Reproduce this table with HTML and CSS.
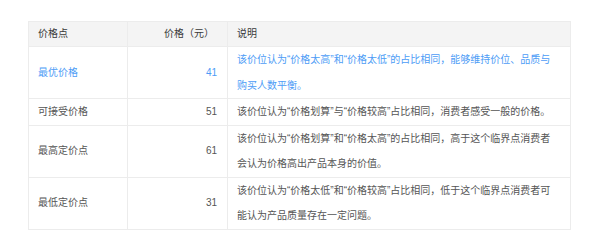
FILE: index.html
```html
<!DOCTYPE html>
<html lang="zh">
<head>
<meta charset="utf-8">
<link rel="stylesheet" href="styles.css">
</head>
<body>
<div class="wrap">
<table class="price-table">
  <thead>
    <tr><th class="c1">价格点</th><th class="c2 num">价格（元）</th><th class="c3">说明</th></tr>
  </thead>
  <tbody>
    <tr class="hl"><td>最优价格</td><td class="num">41</td><td>该价位认为“价格太高”和“价格太低”的占比相同，能够维持价位、品质与购买人数平衡。</td></tr>
    <tr><td>可接受价格</td><td class="num">51</td><td>该价位认为“价格划算”与“价格较高”占比相同，消费者感受一般的价格。</td></tr>
    <tr><td>最高定价点</td><td class="num">61</td><td>该价位认为“价格划算”和“价格太高”的占比相同，高于这个临界点消费者会认为价格高出产品本身的价值。</td></tr>
    <tr><td>最低定价点</td><td class="num">31</td><td>该价位认为“价格太低”和“价格较高”占比相同，低于这个临界点消费者可能认为产品质量存在一定问题。</td></tr>
  </tbody>
</table>
</div>
</body>
</html>
```
FILE: styles.css
```css
html, body { margin: 0; padding: 0; background: #fff; }
.wrap { padding: 21px 0 0 28px; }
.price-table {
  border-collapse: collapse;
  table-layout: fixed;
  width: 542px;
  font-family: "Liberation Sans", "Noto Sans CJK SC", sans-serif;
  font-size: 10px;
  color: #555;
}
.price-table th, .price-table td {
  box-sizing: border-box;
  border: 1px solid #ececec;
  padding: 0 12px 0 9px;
  text-align: left;
  vertical-align: middle;
  line-height: 25.5px;
  font-weight: normal;
}
.price-table .c1 { width: 99px; }
.price-table .c2 { width: 100px; }
.price-table .c3 { width: 343px; }
.price-table th {
  background: #f4f4f4;
  color: #3a3a3a;
  line-height: 24px;
}
.price-table .num { text-align: right; padding-right: 10px; }
.price-table th.num { padding-right: 13px; }
.hl td { color: #4d9cf6; }
```
